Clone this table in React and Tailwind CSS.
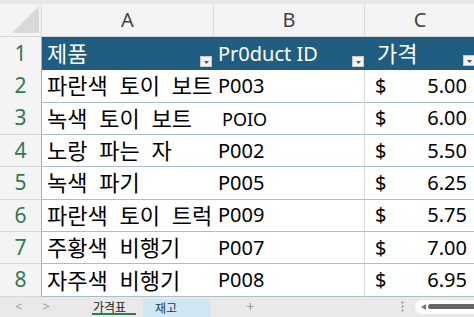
import React from "react";

const rows = [
  { n: 2, name: "파란색 토이 보트", id: "P003", price: "5.00" },
  { n: 3, name: "녹색 토이 보트", id: "POIO", price: "6.00", small: true },
  { n: 4, name: "노랑 파는 자", id: "P002", price: "5.50" },
  { n: 5, name: "녹색 파기", id: "P005", price: "6.25" },
  { n: 6, name: "파란색 토이 트럭", id: "P009", price: "5.75" },
  { n: 7, name: "주황색 비행기", id: "P007", price: "7.00" },
  { n: 8, name: "자주색 비행기", id: "P008", price: "6.95" },
];

const font = { fontFamily: '"Noto Sans", "Noto Sans CJK KR", sans-serif' };
const kfont = { fontFamily: '"Noto Sans", "Noto Sans CJK KR", sans-serif', wordSpacing: "6px" };

function FilterBtn() {
  return (
    <div className="absolute right-[1px] bottom-[3px] w-[12px] h-[11px] bg-[#f3f3f3] border border-[#c9c9c9] flex items-end justify-center pb-[2px]">
      <svg width="5" height="3" viewBox="0 0 5 3">
        <path d="M0 0 L5 0 L2.5 3 Z" fill="#555" />
      </svg>
    </div>
  );
}

export default function App() {
  return (
    <div className="w-[474px] h-[317px] overflow-hidden bg-white flex flex-col text-black" style={font}>
      <div className="h-[4px] bg-[#e7e7e7] shrink-0" />
      {/* column headers */}
      <div className="h-[33px] shrink-0 grid grid-cols-[42px_172px_151px_120px] bg-[#f4f4f4] border-b border-[#d6d6d6]">
        <div className="relative border-r border-[#dadada]">
          <svg className="absolute right-[2px] bottom-[3px]" width="27" height="27" viewBox="0 0 27 27">
            <path d="M27 0 L27 27 L0 27 Z" fill="#d9d9d9" />
          </svg>
        </div>
        <div className="flex items-center justify-center text-[20px] text-[#444] border-r border-[#dadada]">A</div>
        <div className="flex items-center justify-center text-[20px] text-[#444] border-r border-[#dadada]">B</div>
        <div className="flex items-center justify-center text-[20px] text-[#444] pr-[10px]">C</div>
      </div>
      {/* header row 1 */}
      <div className="h-[33px] shrink-0 grid grid-cols-[42px_172px_151px_120px]">
        <div className="flex items-center justify-center bg-[#f4f4f4] border-r border-[#9fb5a8] text-[21px] text-[#2f7a4e]">1</div>
        <div className="relative bg-[#1f5e80] text-white text-[22px] flex items-center pl-[5px] border-r border-[#1f5e80]" style={kfont}>
          제품
          <FilterBtn />
        </div>
        <div className="relative bg-[#1f5e80] text-white text-[20px] flex items-center pl-[4px]">
          Pr0duct ID
          <FilterBtn />
        </div>
        <div className="relative bg-[#1f5e80] text-white text-[22px] flex items-center pl-[12px]" style={kfont}>
          가격
          <div className="absolute left-[98px] bottom-[4px] w-[12px] h-[11px] bg-[#f3f3f3] border border-[#c9c9c9] flex items-end justify-center pb-[2px]">
            <svg width="5" height="3" viewBox="0 0 5 3">
              <path d="M0 0 L5 0 L2.5 3 Z" fill="#555" />
            </svg>
          </div>
        </div>
      </div>
      {rows.map((r) => (
        <div key={r.n} className="h-[32.4px] shrink-0 grid grid-cols-[42px_172px_151px_120px]">
          <div className="flex items-center justify-center bg-[#f4f4f4] border-r border-[#9fb5a8] border-b border-b-[#d9d9d9] text-[21px] text-[#2f7a4e]">
            {r.n}
          </div>
          <div className="overflow-hidden whitespace-nowrap flex items-center pl-[5px] text-[22px] border-b border-[#a9bfcc]" style={kfont}>
            {r.name}
          </div>
          <div className={"overflow-hidden whitespace-nowrap flex items-center border-r border-r-[#dadada] border-b border-[#a9bfcc] " + (r.small ? "pl-[8px] pt-[3px] text-[18px]" : "pl-[4px] text-[20px]")}>
            {r.id}
          </div>
          <div className="flex items-center justify-between pl-[10px] pr-[18px] text-[20px] border-b border-[#a9bfcc]">
            <span>$</span>
            <span>{r.price}</span>
          </div>
        </div>
      ))}
      {/* bottom bar */}
      <div className="flex-1 bg-[#e9e9e9] flex items-stretch relative">
        <div className="w-[90px] flex items-center text-[#9a9a9a] text-[13px] leading-none">
          <span className="ml-[15px]">&lt;</span>
          <span className="ml-[20px]">&gt;</span>
        </div>
        <div className="relative w-[50px] flex items-center pl-[3px] text-[12px] leading-none text-[#222]" style={{ fontFamily: '"Noto Sans CJK KR", sans-serif' }}>
          가격표
          <div className="absolute left-[2px] right-[4px] bottom-[2px] h-[2px] bg-[#2e7d4f]" />
        </div>
        <div className="w-[67px] ml-[3px] mt-[2px] bg-[#cfe7f5] flex items-center pl-[12px] text-[12px] leading-none text-[#1f3550]" style={{ fontFamily: '"Noto Sans CJK KR", sans-serif' }}>
          재고
        </div>
        <div className="ml-[36px] flex items-center text-[#777] text-[15px] leading-none font-light">+</div>
        <div className="ml-[146px] flex items-center">
          <svg width="3" height="11" viewBox="0 0 3 11">
            <circle cx="1.5" cy="1.5" r="1" fill="#888" />
            <circle cx="1.5" cy="5.5" r="1" fill="#888" />
            <circle cx="1.5" cy="9.5" r="1" fill="#888" />
          </svg>
        </div>
        <div className="ml-[11px] my-[3px] flex-1 bg-white rounded-l-full flex items-center pl-[6px]">
          <svg width="5" height="6" viewBox="0 0 5 6">
            <path d="M5 0 L5 6 L0 3 Z" fill="#777" />
          </svg>
          <div className="ml-[2px] flex-1 h-[5px] bg-[#666] rounded-l-full" />
        </div>
      </div>
    </div>
  );
}
